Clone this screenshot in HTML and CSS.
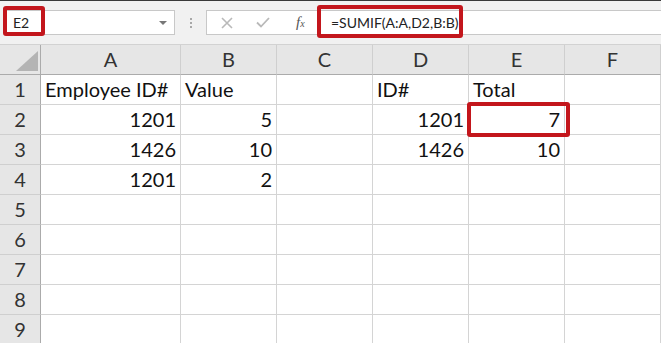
FILE: index.html
```html
<!DOCTYPE html>
<html lang="en">
<head>
  <meta charset="UTF-8" />
  <title>SUMIF example</title>
  <link rel="stylesheet" href="styles.css">
</head>
<body>

<div class="formula-bar">
  <div class="name-box">
    <span class="name-text">E2</span>
    <span class="drop-arrow"></span>
    <span class="mark mark-name"></span>
  </div>
  <div class="grip"><i></i><i></i><i></i></div>
  <div class="formula-box">
    <div class="fx-buttons">
      <svg class="ico" width="12" height="12" viewBox="0 0 12 12"><path d="M1 1 L11 11 M11 1 L1 11" stroke="#b9b9b9" stroke-width="1.6" fill="none"/></svg>
      <svg class="ico" width="14" height="11" viewBox="0 0 14 11"><path d="M1 5.5 L5 9.5 L13 1" stroke="#b9b9b9" stroke-width="1.8" fill="none"/></svg>
      <span class="fx">f<sub>x</sub></span>
    </div>
    <div class="formula-input">
      <span class="formula-text">=SUMIF(A:A,D2,B:B)</span>
      <span class="mark mark-formula"></span>
    </div>
  </div>
</div>

<div class="sheet">
  <div class="hd corner"><span class="tri"></span></div>
  <div class="hd col">A</div>
  <div class="hd col">B</div>
  <div class="hd col">C</div>
  <div class="hd col">D</div>
  <div class="hd col">E</div>
  <div class="hd col">F</div>

  <div class="hd row">1</div>
  <div class="cell">Employee ID#</div>
  <div class="cell">Value</div>
  <div class="cell"></div>
  <div class="cell">ID#</div>
  <div class="cell">Total</div>
  <div class="cell"></div>

  <div class="hd row">2</div>
  <div class="cell num">1201</div>
  <div class="cell num">5</div>
  <div class="cell"></div>
  <div class="cell num">1201</div>
  <div class="cell num active">7<span class="mark mark-cell"></span></div>
  <div class="cell"></div>

  <div class="hd row">3</div>
  <div class="cell num">1426</div>
  <div class="cell num">10</div>
  <div class="cell"></div>
  <div class="cell num">1426</div>
  <div class="cell num">10</div>
  <div class="cell"></div>

  <div class="hd row">4</div>
  <div class="cell num">1201</div>
  <div class="cell num">2</div>
  <div class="cell"></div>
  <div class="cell"></div>
  <div class="cell"></div>
  <div class="cell"></div>

  <div class="hd row">5</div>
  <div class="cell"></div><div class="cell"></div><div class="cell"></div><div class="cell"></div><div class="cell"></div><div class="cell"></div>
  <div class="hd row">6</div>
  <div class="cell"></div><div class="cell"></div><div class="cell"></div><div class="cell"></div><div class="cell"></div><div class="cell"></div>
  <div class="hd row">7</div>
  <div class="cell"></div><div class="cell"></div><div class="cell"></div><div class="cell"></div><div class="cell"></div><div class="cell"></div>
  <div class="hd row">8</div>
  <div class="cell"></div><div class="cell"></div><div class="cell"></div><div class="cell"></div><div class="cell"></div><div class="cell"></div>
  <div class="hd row">9</div>
  <div class="cell"></div><div class="cell"></div><div class="cell"></div><div class="cell"></div><div class="cell"></div><div class="cell"></div>
</div>

</body>
</html>
```

FILE: styles.css
```css
html, body {
    margin: 0;
    padding: 0;
    background: #fff;
    overflow: hidden;
    font-family: Lato, "Open Sans", sans-serif;
}

/* Formula bar */
.formula-bar {
    box-sizing: border-box;
    height: 45px;
    background: #f1f1f1;
    border-top: 1px solid #3a3a3a;
    border-bottom: 1px solid #d2d2d2;
    display: flex;
    align-items: center;
    padding: 0 0 0 5px;
}
.name-box {
    position: relative;
    box-sizing: border-box;
    width: 170px;
    height: 25px;
    background: #fff;
    border: 1px solid #c8c8c8;
    display: flex;
    align-items: center;
    padding-left: 7px;
}
.name-text {
    font-size: 14px;
    color: #222;
    flex: 1;
}
.drop-arrow {
    width: 0;
    height: 0;
    border-left: 4px solid transparent;
    border-right: 4px solid transparent;
    border-top: 4px solid #777;
    margin-right: 7px;
}
.grip {
    display: flex;
    flex-direction: column;
    gap: 2px;
    margin: 0 14px 0 15px;
}
.grip i {
    width: 2px;
    height: 2px;
    background: #a8a8a8;
}
.formula-box {
    flex: 1;
    height: 25px;
    background: #fff;
    border: 1px solid #c8c8c8;
    border-right: none;
    box-sizing: border-box;
    display: flex;
    align-items: center;
}
.fx-buttons {
    width: 110px;
    display: flex;
    align-items: center;
    padding-left: 14px;
    gap: 23px;
    box-sizing: border-box;
}
.fx {
    font-family: "Liberation Serif", serif;
    font-style: italic;
    font-size: 15px;
    color: #555;
    margin-left: 3px;
}
.fx sub {
    font-size: 10px;
    vertical-align: baseline;
}
.formula-input {
    position: relative;
    flex: 1;
    height: 100%;
    display: flex;
    align-items: center;
    padding-left: 14px;
}
.formula-text {
    font-size: 14px;
    color: #222;
}

/* Red annotation frames */
.mark {
    position: absolute;
    border: 4px solid #c3161c;
    border-radius: 3px;
    pointer-events: none;
}
.mark-name {
    left: -3px;
    top: -5px;
    width: 34px;
    height: 22px;
}
.mark-formula {
    left: 0;
    top: -6px;
    width: 138px;
    height: 25px;
}
.mark-cell {
    left: -2px;
    top: -3px;
    right: -6px;
    bottom: -3px;
}

/* Grid */
.sheet {
    display: grid;
    grid-template-columns: 41px 140px 96px 96px 96px 96px 96px;
    grid-auto-rows: 30px;
}
.hd, .cell {
    box-sizing: border-box;
    border-right: 1px solid #d4d4d4;
    border-bottom: 1px solid #d4d4d4;
    font-size: 20px;
    line-height: 29px;
    white-space: nowrap;
    overflow: visible;
}
.hd {
    background: #e6e6e6;
    color: #333;
    text-align: center;
}
.hd.col {
    border-right-color: #cfcfcf;
    border-bottom-color: #ababab;
}
.hd.row {
    border-right-color: #ababab;
    border-bottom-color: #cfcfcf;
}
.corner {
    position: relative;
    border-right-color: #ababab;
    border-bottom-color: #ababab;
}
.tri {
    position: absolute;
    right: 2px;
    bottom: 3px;
    width: 0;
    height: 0;
    border-left: 22px solid transparent;
    border-bottom: 20px solid #b4b4b4;
}
.cell {
    color: #111;
    padding: 0 4px;
}
.num {
    text-align: right;
}
.active {
    position: relative;
}
```
